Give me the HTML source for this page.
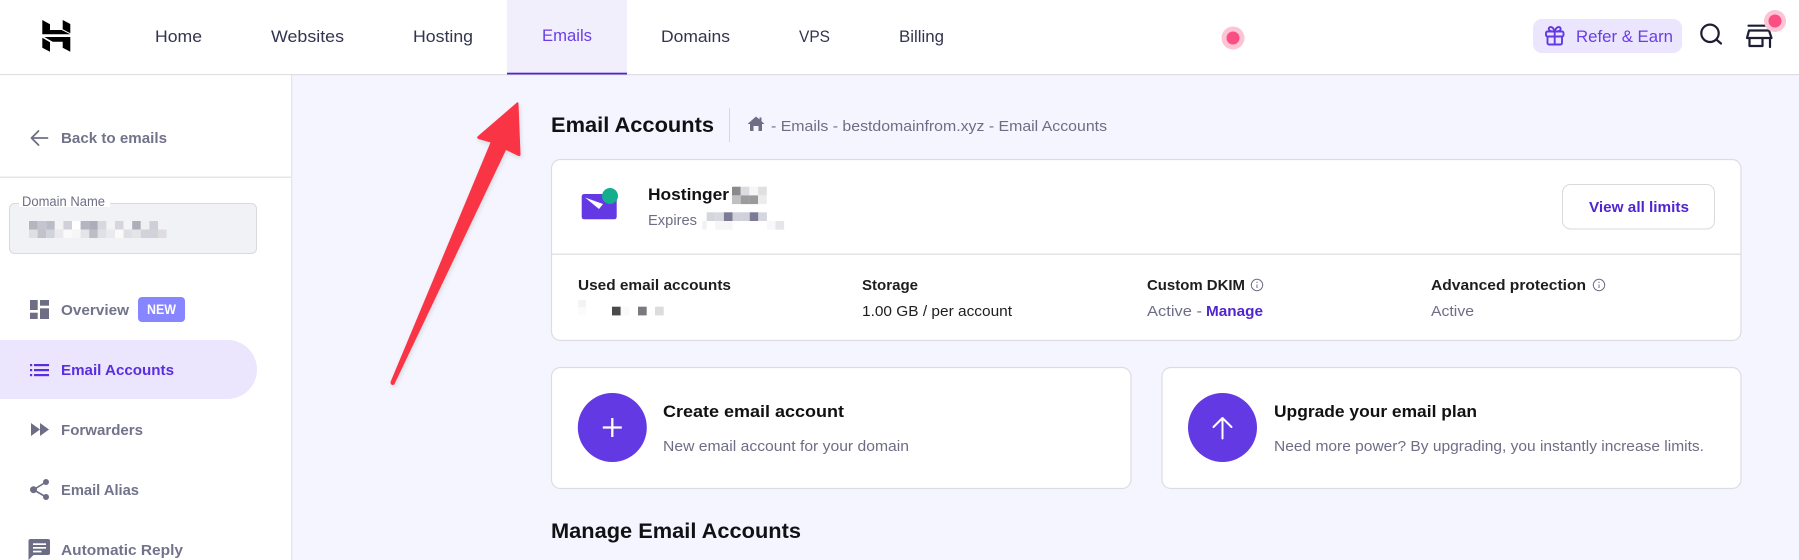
<!DOCTYPE html>
<html lang="en">
<head>
<meta charset="utf-8">
<title>Email Accounts</title>
<style>
html,body{margin:0;padding:0;width:1799px;height:560px;overflow:hidden;background:#f4f5ff}
svg{display:block;font-family:"Liberation Sans",sans-serif;filter:blur(.35px)}
.nav{font-size:17px;fill:#33344e}
.side{font-size:15px;font-weight:bold;fill:#72738a}
.g{font-size:15px;fill:#6d6e85}
.b{font-size:15px;font-weight:bold;fill:#1d1e20}
.t{font-size:17px;font-weight:bold;fill:#111114}
.h{font-size:21px;font-weight:bold;fill:#111114}
.card{fill:#fff;stroke:#dcdce2;stroke-width:1.2}
</style>
</head>
<body>
<svg width="1799" height="560" viewBox="0 0 1799 560" xmlns="http://www.w3.org/2000/svg">
<defs><filter id="s" x="-20%" y="-10%" width="140%" height="120%"><feDropShadow dx="1" dy="2" stdDeviation="2" flood-color="#000" flood-opacity=".12"/></filter></defs>
<rect width="1799" height="560" fill="#f4f5ff"/>

<!-- header -->
<rect width="1799" height="74" fill="#fff"/>
<rect y="74" width="1799" height="1.2" fill="#dfdfe3"/>
<rect x="507" width="120" height="73" fill="#f1effc"/>
<rect x="507" y="72.700" width="120" height="1.800" fill="#5025d1"/>
<g fill="#000">
<polygon points="42.300,20 50,24.300 50,30 61.700,30 70.300,34.300 42.300,34.300"/>
<polygon points="62.700,20 70.300,24 70.300,33.300 62.700,29.300"/>
<polygon points="42.300,37.700 50,42.300 50,51.700 42.300,47.700"/>
<polygon points="44.300,37 70.300,37 70.300,51.700 62.700,47.700 62.700,41.700 52.700,41.700"/>
</g>
<text class="nav" x="155" y="42" textLength="47" lengthAdjust="spacingAndGlyphs">Home</text>
<text class="nav" x="271" y="42" textLength="73" lengthAdjust="spacingAndGlyphs">Websites</text>
<text class="nav" x="413" y="42" textLength="60" lengthAdjust="spacingAndGlyphs">Hosting</text>
<text class="nav" x="542" y="41" textLength="50" lengthAdjust="spacingAndGlyphs" style="fill:#6a3ee6">Emails</text>
<text class="nav" x="661" y="42" textLength="69" lengthAdjust="spacingAndGlyphs">Domains</text>
<text class="nav" x="799" y="42" textLength="31" lengthAdjust="spacingAndGlyphs">VPS</text>
<text class="nav" x="899" y="42" textLength="45" lengthAdjust="spacingAndGlyphs">Billing</text>
<circle cx="1233" cy="38" r="11.500" fill="#fdc4d6"/><circle cx="1233" cy="38" r="6.500" fill="#fb4f83"/>

<rect x="1533" y="19" width="149" height="34" rx="9" fill="#ebe5fd"/>
<g fill="none" stroke="#6239e2" stroke-width="1.900" stroke-linejoin="round">
<rect x="1546" y="31.500" width="17.500" height="5" rx="1.500"/>
<path d="M1547.500 36.500V43a1.500 1.500 0 0 0 1.500 1.500h11.500a1.500 1.500 0 0 0 1.500-1.500V36.500M1554.700 31.500V44.500M1554.700 31.500c-1-3-2.500-4.500-4-4.500s-2.300 1.300-1.800 2.700c.4 1.200 2.300 1.800 5.800 1.800zM1554.700 31.500c1-3 2.500-4.500 4-4.500s2.300 1.300 1.800 2.700c-.4 1.200-2.300 1.800-5.800 1.800z"/>
</g>
<text x="1576" y="42" font-size="17" fill="#6a3ee6" textLength="97" lengthAdjust="spacingAndGlyphs">Refer &amp; Earn</text>
<g fill="none" stroke="#1d1e33" stroke-width="2.200" stroke-linecap="round" stroke-linejoin="round">
<circle cx="1710" cy="33.300" r="8.700"/><path d="M1716.300 39.500L1721 43.500"/>
<path d="M1748.500 25.700H1768M1749 30.500H1769L1771.500 38H1747ZM1749.500 38V46H1762.500V38M1770 38V47"/>
</g>
<circle cx="1775" cy="21" r="11" fill="#fdc4d6"/><circle cx="1775" cy="21" r="6.500" fill="#fb4f83"/>

<!-- sidebar -->
<rect y="75.200" width="291" height="485" fill="#fff"/>
<rect x="291" y="75.200" width="1.200" height="485" fill="#e3e3e8"/>
<path d="M47.500 138H31.500M38.500 131L31.500 138L38.500 145" fill="none" stroke="#6d6e85" stroke-width="1.800" stroke-linecap="round" stroke-linejoin="round"/>
<text class="side" x="61" y="143" textLength="106" lengthAdjust="spacingAndGlyphs">Back to emails</text>
<rect y="176.600" width="291" height="1.200" fill="#dfdfe3"/>

<rect x="9.500" y="203.500" width="247" height="50" rx="5" fill="#f1f2f6" stroke="#d9dade"/>
<rect x="19" y="197" width="91" height="10" fill="#fff"/>
<text x="22" y="206" font-size="13.500" fill="#6d6e85" textLength="83" lengthAdjust="spacingAndGlyphs">Domain Name</text>
<g>
<rect x="29" y="221" width="8.600" height="8.500" fill="#b5b5c0"/><rect x="37.600" y="221" width="8.600" height="8.500" fill="#c5c5d0"/><rect x="46.200" y="221" width="8.600" height="8.500" fill="#bcbcc8"/><rect x="54.800" y="221" width="8.600" height="8.500" fill="#f3f3f6"/><rect x="63.400" y="221" width="8.600" height="8.500" fill="#d0d0da"/><rect x="72" y="221" width="8.600" height="8.500" fill="#fff"/><rect x="80.600" y="221" width="8.600" height="8.500" fill="#b5b5c2"/><rect x="89.200" y="221" width="8.600" height="8.500" fill="#adadba"/><rect x="97.800" y="221" width="8.600" height="8.500" fill="#d8d8e0"/><rect x="106.400" y="221" width="8.600" height="8.500" fill="#f3f3f5"/><rect x="115" y="221" width="8.600" height="8.500" fill="#d5d5de"/><rect x="123.600" y="221" width="8.600" height="8.500" fill="#f5f5f7"/><rect x="132.200" y="221" width="8.600" height="8.500" fill="#aeaeba"/><rect x="140.800" y="221" width="8.600" height="8.500" fill="#f0f0f3"/><rect x="149.400" y="221" width="8.600" height="8.500" fill="#cfcfd9"/><rect x="158" y="221" width="8.600" height="8.500" fill="#f3f3f5"/>
<rect x="29" y="229.500" width="8.600" height="8.500" fill="#dedee3"/><rect x="37.600" y="229.500" width="8.600" height="8.500" fill="#c2c2cc"/><rect x="46.200" y="229.500" width="8.600" height="8.500" fill="#d2d2da"/><rect x="54.800" y="229.500" width="8.600" height="8.500" fill="#e9e9ee"/><rect x="63.400" y="229.500" width="8.600" height="8.500" fill="#fafafa"/><rect x="72" y="229.500" width="8.600" height="8.500" fill="#f6f6f8"/><rect x="80.600" y="229.500" width="8.600" height="8.500" fill="#e4e4e9"/><rect x="89.200" y="229.500" width="8.600" height="8.500" fill="#bdbdc8"/><rect x="97.800" y="229.500" width="8.600" height="8.500" fill="#e0e0e6"/><rect x="106.400" y="229.500" width="8.600" height="8.500" fill="#e9e9ee"/><rect x="115" y="229.500" width="8.600" height="8.500" fill="#fafafa"/><rect x="123.600" y="229.500" width="8.600" height="8.500" fill="#dedee4"/><rect x="132.200" y="229.500" width="8.600" height="8.500" fill="#e4e4e9"/><rect x="140.800" y="229.500" width="8.600" height="8.500" fill="#d2d2da"/><rect x="149.400" y="229.500" width="8.600" height="8.500" fill="#d2d2da"/><rect x="158" y="229.500" width="8.600" height="8.500" fill="#dcdce2"/>
</g>

<g fill="#6d6e85">
<rect x="30" y="300" width="7.700" height="10"/><rect x="30" y="312.700" width="7.700" height="6.300"/><rect x="40" y="300" width="9" height="5.700"/><rect x="40" y="308.300" width="9" height="10.700"/>
</g>
<text class="side" x="61" y="315" textLength="68" lengthAdjust="spacingAndGlyphs">Overview</text>
<rect x="138" y="297" width="47" height="25" rx="4" fill="#8785ff"/>
<text x="147" y="314" font-size="13.500" font-weight="bold" fill="#fff" textLength="29" lengthAdjust="spacingAndGlyphs">NEW</text>

<path d="M0 340H227.500A29.500 29.500 0 0 1 257 369.500A29.500 29.500 0 0 1 227.500 399H0Z" fill="#ebe5fd"/>
<g fill="#5a2ee0">
<rect x="30" y="364" width="2.200" height="2.200"/><rect x="30" y="369" width="2.200" height="2.200"/><rect x="30" y="374" width="2.200" height="2.200"/>
<rect x="34" y="364" width="15" height="2.200"/><rect x="34" y="369" width="15" height="2.200"/><rect x="34" y="374" width="15" height="2.200"/>
</g>
<text class="side" x="61" y="375" textLength="113" lengthAdjust="spacingAndGlyphs" style="fill:#5a2ee0">Email Accounts</text>

<polygon points="31,423 40,429.500 31,436" fill="#6d6e85"/><polygon points="40,423 49,429.500 40,436" fill="#6d6e85"/>
<text class="side" x="61" y="435" textLength="82" lengthAdjust="spacingAndGlyphs">Forwarders</text>

<g fill="#6d6e85"><circle cx="46" cy="482" r="3"/><circle cx="33.500" cy="489.700" r="3.500"/><circle cx="46" cy="497" r="3"/></g>
<path d="M46 482L33.500 489.700L46 497" fill="none" stroke="#6d6e85" stroke-width="1.600"/>
<text class="side" x="61" y="495" textLength="78" lengthAdjust="spacingAndGlyphs">Email Alias</text>

<path d="M30.500 539H48a2 2 0 0 1 2 2V553a2 2 0 0 1-2 2H33.500L28.500 560V541a2 2 0 0 1 2-2Z" fill="#6d6e85"/>
<g fill="#fff"><rect x="33" y="543.300" width="13" height="1.700"/><rect x="33" y="547" width="13" height="1.700"/><rect x="33" y="550.700" width="8.500" height="1.700"/></g>
<text class="side" x="61" y="555" textLength="122" lengthAdjust="spacingAndGlyphs">Automatic Reply</text>

<!-- page head -->
<text class="h" x="551" y="132" textLength="163" lengthAdjust="spacingAndGlyphs">Email Accounts</text>
<rect x="729" y="108" width="1" height="34" fill="#d7d8de"/>
<polygon points="756,116.500 759.500,119.500 759.500,117.500 761.500,117.500 761.500,121.300 764.500,124 762,124 762,131 758.500,131 758.500,126 753.500,126 753.500,131 750,131 750,124 747.500,124" fill="#6d6e85"/>
<text class="g" x="771" y="131" textLength="336" lengthAdjust="spacingAndGlyphs">- Emails - bestdomainfrom.xyz - Email Accounts</text>

<!-- plan card -->
<rect class="card" x="551.500" y="159.500" width="1189.500" height="181" rx="9"/>
<rect x="552" y="253.600" width="1189" height="1.200" fill="#dcdce2"/>
<rect x="581.700" y="194" width="35" height="25.300" rx="2.500" fill="#6339e3"/>
<polygon points="585,197.500 603,204 599,209" fill="#fff"/>
<circle cx="610" cy="196" r="8" fill="#12ae8e"/>
<text class="t" x="648" y="200" textLength="81" lengthAdjust="spacingAndGlyphs">Hostinger</text>
<g>
<rect x="732" y="186.700" width="8.700" height="8.700" fill="#8a8a8e"/><rect x="740.700" y="186.700" width="8.700" height="8.700" fill="#dcdcde"/><rect x="749.400" y="186.700" width="8.700" height="8.700" fill="#f6f6f6"/><rect x="758.100" y="186.700" width="8.700" height="8.700" fill="#e0e0e2"/>
<rect x="732" y="195.400" width="8.700" height="8.700" fill="#c0c0c2"/><rect x="740.700" y="195.400" width="8.700" height="8.700" fill="#9c9c9e"/><rect x="749.400" y="195.400" width="8.700" height="8.700" fill="#9a9a9c"/><rect x="758.100" y="195.400" width="8.700" height="8.700" fill="#ececec"/>
</g>
<text class="g" x="648" y="225" textLength="49" lengthAdjust="spacingAndGlyphs">Expires</text>
<g>
<rect x="706.700" y="212.300" width="8.600" height="8.700" fill="#d5d5dd"/><rect x="715.300" y="212.300" width="8.600" height="8.700" fill="#d8d8e0"/><rect x="723.900" y="212.300" width="8.600" height="8.700" fill="#7b7b96"/><rect x="732.500" y="212.300" width="8.600" height="8.700" fill="#d0d0da"/><rect x="741.100" y="212.300" width="8.600" height="8.700" fill="#d0d0da"/><rect x="749.700" y="212.300" width="8.600" height="8.700" fill="#7b7b96"/><rect x="758.300" y="212.300" width="8.600" height="8.700" fill="#d6d6de"/>
<rect x="702.300" y="221" width="4.400" height="8.700" fill="#f2f2f4"/><rect x="715.300" y="221" width="17.200" height="8.700" fill="#f6f6f8"/><rect x="766.900" y="221" width="8.600" height="8.700" fill="#f8f8fa"/><rect x="775.500" y="221" width="8.600" height="8.700" fill="#e6e6ea"/>
</g>
<rect x="1562.500" y="184.500" width="152" height="44.500" rx="8" fill="#fff" stroke="#d9dade" stroke-width="1"/>
<text x="1589" y="212" font-size="15" font-weight="bold" fill="#5025d1" textLength="100" lengthAdjust="spacingAndGlyphs">View all limits</text>

<text class="b" x="578" y="290" textLength="153" lengthAdjust="spacingAndGlyphs">Used email accounts</text>
<text class="b" x="862" y="290" textLength="56" lengthAdjust="spacingAndGlyphs">Storage</text>
<text class="b" x="1147" y="290" textLength="98" lengthAdjust="spacingAndGlyphs">Custom DKIM</text>
<text class="b" x="1431" y="290" textLength="155" lengthAdjust="spacingAndGlyphs">Advanced protection</text>
<g fill="none" stroke="#6d6e85" stroke-width="1">
<circle cx="1257" cy="285" r="5.700"/><path d="M1257 284.500V288M1257 281.800V283"/>
<circle cx="1599" cy="285" r="5.700"/><path d="M1599 284.500V288M1599 281.800V283"/>
</g>
<rect x="578.300" y="300" width="7.700" height="7.300" fill="#f3f3f3"/><rect x="578.300" y="307.300" width="7.700" height="8" fill="#fbfbfb"/>
<rect x="612" y="306.700" width="8.700" height="8.700" fill="#4a4a4c"/><rect x="620.700" y="306.700" width="8.700" height="8.700" fill="#fafafa"/><rect x="638" y="306.700" width="8.700" height="8.700" fill="#7a7a7e"/><rect x="655" y="306.700" width="8.700" height="8.700" fill="#dcdcde"/>
<text x="862" y="316" font-size="15" fill="#1d1e20" textLength="150" lengthAdjust="spacingAndGlyphs">1.00 GB / per account</text>
<text class="g" x="1147" y="316" textLength="55" lengthAdjust="spacingAndGlyphs">Active -</text>
<text x="1206" y="316" font-size="15" font-weight="bold" fill="#5025d1" textLength="57" lengthAdjust="spacingAndGlyphs">Manage</text>
<text class="g" x="1431" y="316" textLength="43" lengthAdjust="spacingAndGlyphs">Active</text>

<!-- action cards -->
<rect class="card" x="551.500" y="367.500" width="579.500" height="121" rx="9"/>
<circle cx="612.300" cy="427.500" r="34.500" fill="#6239e2"/>
<path d="M602.800 427.500H621.800M612.300 418V437" stroke="#fff" stroke-width="2.300"/>
<text class="t" x="663" y="417" textLength="181" lengthAdjust="spacingAndGlyphs">Create email account</text>
<text class="g" x="663" y="451" textLength="246" lengthAdjust="spacingAndGlyphs">New email account for your domain</text>

<rect class="card" x="1162" y="367.500" width="579" height="121" rx="9"/>
<circle cx="1222.500" cy="427.500" r="34.500" fill="#6239e2"/>
<path d="M1222.500 438.500V418.500M1213.500 427L1222.500 418L1231.500 427" fill="none" stroke="#fff" stroke-width="2" stroke-linecap="round" stroke-linejoin="round"/>
<text class="t" x="1274" y="417" textLength="203" lengthAdjust="spacingAndGlyphs">Upgrade your email plan</text>
<text class="g" x="1274" y="451" textLength="430" lengthAdjust="spacingAndGlyphs">Need more power? By upgrading, you instantly increase limits.</text>

<text class="h" x="551" y="538" textLength="250" lengthAdjust="spacingAndGlyphs">Manage Email Accounts</text>

<!-- annotation arrow -->
<path d="M517 102.500L477.500 136.500Q476.500 138.500 478.500 139L490.500 142.500L390.500 382Q390.500 385 393 385Q394.500 385 395 383L506 150L518.500 156Q520.500 156.500 520.500 154L518.500 103.500Q518 101.500 517 102.500Z" fill="#f93444" filter="url(#s)"/>
</svg>
</body>
</html>
